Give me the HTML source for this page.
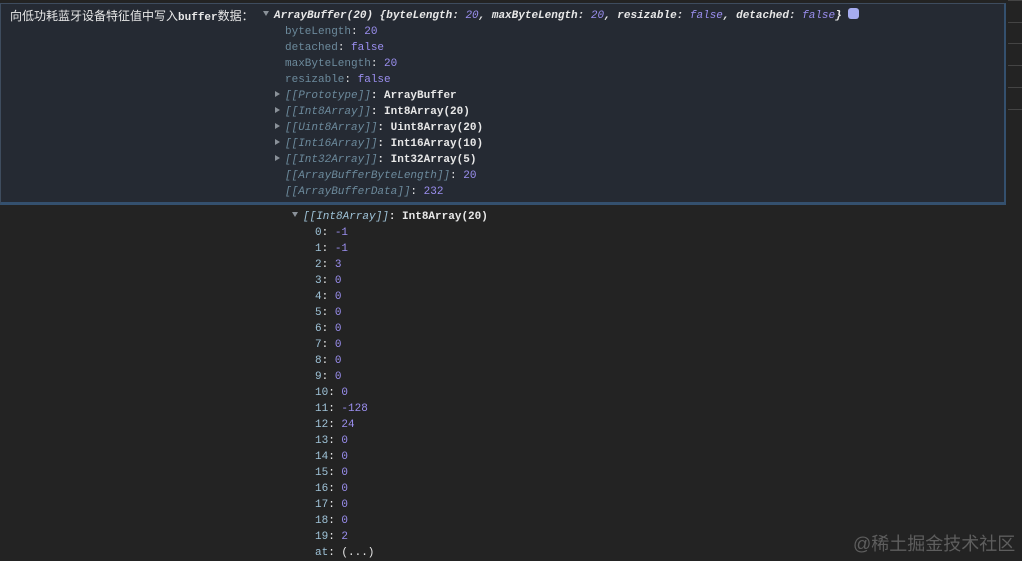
<!DOCTYPE html>
<html><head><meta charset="utf-8"><style>
body{margin:0;width:1022px;height:561px;background:#232323;overflow:hidden;position:relative;font-family:"Liberation Mono",monospace;font-size:11px;}
.r{position:absolute;white-space:pre;line-height:16px;}
.k{color:#9fc3d8}
.d{color:#6c8a9c}
.n{color:#9b8ff0}
.w{color:#e8e8e8}
.i{font-style:italic}
.b{font-weight:bold}
.tri{display:inline-block;width:0;height:0;border-top:3.5px solid transparent;border-bottom:3.5px solid transparent;border-left:5px solid #8a9199;vertical-align:1px;margin-right:5px}
.trd{display:inline-block;width:0;height:0;border-left:3.5px solid transparent;border-right:3.5px solid transparent;border-top:5px solid #8a9199;vertical-align:2px;margin-right:5px}
#pop{position:absolute;left:0;top:3px;width:1003px;height:198px;background:#252a33;border:1px solid #3e4c5e;border-bottom:3px solid #34506e;border-right:2px solid #34506e;}
.ln{position:absolute;left:1008px;width:14px;height:1px;background:#444;}
#wm{position:absolute;left:853px;top:530px;font-family:"Liberation Sans","Noto Sans CJK SC",sans-serif;font-size:18px;color:#5e5e5e;}
</style></head><body>
<div class="ln" style="top:0"></div>
<div class="ln" style="top:22px"></div>
<div class="ln" style="top:43px"></div>
<div class="ln" style="top:65px"></div>
<div class="ln" style="top:87px"></div>
<div class="ln" style="top:109px"></div>
<div class="r" style="left:292px;top:209px"><span class="trd"></span><span class="k i">[[Int8Array]]</span><span class="w b">: Int8Array(20)</span></div>
<div class="r" style="left:315px;top:225px"><span class="k">0</span><span class="w">: </span><span class="n">-1</span>
<span class="k">1</span><span class="w">: </span><span class="n">-1</span>
<span class="k">2</span><span class="w">: </span><span class="n">3</span>
<span class="k">3</span><span class="w">: </span><span class="n">0</span>
<span class="k">4</span><span class="w">: </span><span class="n">0</span>
<span class="k">5</span><span class="w">: </span><span class="n">0</span>
<span class="k">6</span><span class="w">: </span><span class="n">0</span>
<span class="k">7</span><span class="w">: </span><span class="n">0</span>
<span class="k">8</span><span class="w">: </span><span class="n">0</span>
<span class="k">9</span><span class="w">: </span><span class="n">0</span>
<span class="k">10</span><span class="w">: </span><span class="n">0</span>
<span class="k">11</span><span class="w">: </span><span class="n">-128</span>
<span class="k">12</span><span class="w">: </span><span class="n">24</span>
<span class="k">13</span><span class="w">: </span><span class="n">0</span>
<span class="k">14</span><span class="w">: </span><span class="n">0</span>
<span class="k">15</span><span class="w">: </span><span class="n">0</span>
<span class="k">16</span><span class="w">: </span><span class="n">0</span>
<span class="k">17</span><span class="w">: </span><span class="n">0</span>
<span class="k">18</span><span class="w">: </span><span class="n">0</span>
<span class="k">19</span><span class="w">: </span><span class="n">2</span>
<span class="k">at</span><span class="w">: (...)</span></div>
<div id="pop"></div>
<div class="r w" style="left:10px;top:8px;font-family:'Liberation Sans','Noto Sans CJK SC',sans-serif;font-size:12px;">向低功耗蓝牙设备特征值中写入<span style="font-family:'Liberation Mono',monospace;font-weight:bold;font-size:11px">buffer</span>数据：</div>
<div class="r" style="left:263px;top:8px"><span class="trd"></span><span class="w i b">ArrayBuffer(20) {byteLength: <span class="n" style="font-weight:normal">20</span>, maxByteLength: <span class="n" style="font-weight:normal">20</span>, resizable: <span class="n" style="font-weight:normal">false</span>, detached: <span class="n" style="font-weight:normal">false</span>}</span> <span style="display:inline-block;width:11px;height:11px;background:#a6acf0;border-radius:3px;vertical-align:-1px"></span></div>
<div class="r" style="left:285px;top:24px"><span class="d">byteLength</span><span class="w">: </span><span class="n">20</span>
<span class="d">detached</span><span class="w">: </span><span class="n">false</span>
<span class="d">maxByteLength</span><span class="w">: </span><span class="n">20</span>
<span class="d">resizable</span><span class="w">: </span><span class="n">false</span></div>
<div class="r" style="left:275px;top:88px"><span class="tri"></span><span class="d i">[[Prototype]]</span><span class="w b">: ArrayBuffer</span></div>
<div class="r" style="left:275px;top:104px"><span class="tri"></span><span class="d i">[[Int8Array]]</span><span class="w b">: Int8Array(20)</span></div>
<div class="r" style="left:275px;top:120px"><span class="tri"></span><span class="d i">[[Uint8Array]]</span><span class="w b">: Uint8Array(20)</span></div>
<div class="r" style="left:275px;top:136px"><span class="tri"></span><span class="d i">[[Int16Array]]</span><span class="w b">: Int16Array(10)</span></div>
<div class="r" style="left:275px;top:152px"><span class="tri"></span><span class="d i">[[Int32Array]]</span><span class="w b">: Int32Array(5)</span></div>
<div class="r" style="left:285px;top:168px"><span class="d i">[[ArrayBufferByteLength]]</span><span class="w">: </span><span class="n">20</span></div>
<div class="r" style="left:285px;top:184px"><span class="d i">[[ArrayBufferData]]</span><span class="w">: </span><span class="n">232</span></div>
<div id="wm">@稀土掘金技术社区</div>
</body></html>
